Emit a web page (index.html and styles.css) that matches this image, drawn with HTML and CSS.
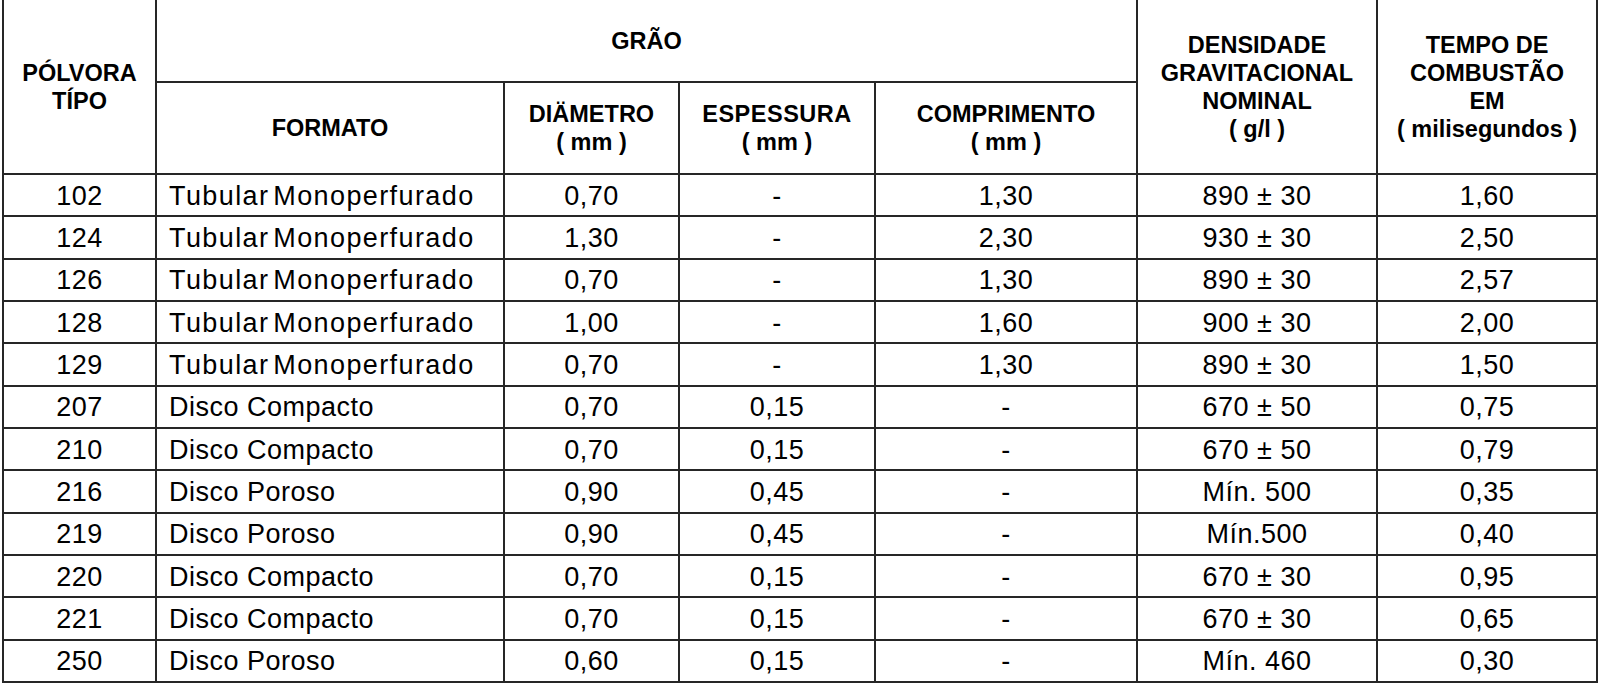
FILE: index.html
```html
<!DOCTYPE html>
<html lang="pt">
<head>
<meta charset="utf-8">
<title>Pólvoras</title>
<link rel="stylesheet" href="styles.css">
</head>
<body>
<table class="grid">
  <colgroup>
    <col class="c-tipo">
    <col class="c-formato">
    <col class="c-diam">
    <col class="c-esp">
    <col class="c-comp">
    <col class="c-dens">
    <col class="c-tempo">
  </colgroup>
  <thead>
    <tr class="h1">
      <th rowspan="2">PÓLVORA<br>TÍPO</th>
      <th colspan="4" class="grao">GRÃO</th>
      <th rowspan="2">DENSIDADE<br>GRAVITACIONAL<br>NOMINAL<br>( g/l )</th>
      <th rowspan="2">TEMPO DE<br>COMBUSTÃO<br>EM<br>( milisegundos )</th>
    </tr>
    <tr class="h2">
      <th>FORMATO</th>
      <th>DIÄMETRO<br>( mm )</th>
      <th><span class="spaced">ESPESSURA</span><br>( mm )</th>
      <th>COMPRIMENTO<br>( mm )</th>
    </tr>
  </thead>
  <tbody>
    <tr><td>102</td><td class="fmt tub">Tubular Monoperfurado</td><td>0,70</td><td>-</td><td>1,30</td><td>890 ± 30</td><td>1,60</td></tr>
    <tr><td>124</td><td class="fmt tub">Tubular Monoperfurado</td><td>1,30</td><td>-</td><td>2,30</td><td>930 ± 30</td><td>2,50</td></tr>
    <tr><td>126</td><td class="fmt tub">Tubular Monoperfurado</td><td>0,70</td><td>-</td><td>1,30</td><td>890 ± 30</td><td>2,57</td></tr>
    <tr><td>128</td><td class="fmt tub">Tubular Monoperfurado</td><td>1,00</td><td>-</td><td>1,60</td><td>900 ± 30</td><td>2,00</td></tr>
    <tr><td>129</td><td class="fmt tub">Tubular Monoperfurado</td><td>0,70</td><td>-</td><td>1,30</td><td>890 ± 30</td><td>1,50</td></tr>
    <tr><td>207</td><td class="fmt">Disco Compacto</td><td>0,70</td><td>0,15</td><td>-</td><td>670 ± 50</td><td>0,75</td></tr>
    <tr><td>210</td><td class="fmt">Disco Compacto</td><td>0,70</td><td>0,15</td><td>-</td><td>670 ± 50</td><td>0,79</td></tr>
    <tr><td>216</td><td class="fmt">Disco Poroso</td><td>0,90</td><td>0,45</td><td>-</td><td>Mín. 500</td><td>0,35</td></tr>
    <tr><td>219</td><td class="fmt">Disco Poroso</td><td>0,90</td><td>0,45</td><td>-</td><td>Mín.500</td><td>0,40</td></tr>
    <tr><td>220</td><td class="fmt">Disco Compacto</td><td>0,70</td><td>0,15</td><td>-</td><td>670 ± 30</td><td>0,95</td></tr>
    <tr><td>221</td><td class="fmt">Disco Compacto</td><td>0,70</td><td>0,15</td><td>-</td><td>670 ± 30</td><td>0,65</td></tr>
    <tr><td>250</td><td class="fmt">Disco Poroso</td><td>0,60</td><td>0,15</td><td>-</td><td>Mín. 460</td><td>0,30</td></tr>
  </tbody>
</table>
</body>
</html>
```

FILE: styles.css
```css
html, body {
  margin: 0;
  padding: 0;
  background: #ffffff;
}

body {
  padding-left: 2px;
  font-family: "Liberation Sans", Arial, sans-serif;
  color: #000;
  overflow: hidden;
}

.grid {
  border-collapse: collapse;
  table-layout: fixed;
  width: 1594px;
}

.c-tipo { width: 153px; }
.c-formato { width: 348px; }
.c-diam { width: 175px; }
.c-esp { width: 196px; }
.c-comp { width: 262px; }
.c-dens { width: 240px; }
.c-tempo { width: 220px; }

.grid th,
.grid td {
  border: 2px solid #262626;
  padding: 0;
  text-align: center;
  vertical-align: middle;
}

.grid thead tr.h1 th {
  border-top: none;
}

.grid th {
  font-weight: bold;
  font-size: 23.5px;
  line-height: 28px;
}

.h1 { height: 82px; }
.h2 { height: 92px; }

.grid tbody tr { height: 42.33px; }

.grid td {
  font-size: 27px;
  line-height: 30px;
  letter-spacing: 0.5px;
  padding-top: 1px;
  white-space: nowrap;
}

.grid td.fmt {
  text-align: left;
  padding-left: 12px;
}

.grid td.tub {
  letter-spacing: 1.4px;
  word-spacing: -5px;
}

.spaced {
  letter-spacing: 0.5px;
}
```
